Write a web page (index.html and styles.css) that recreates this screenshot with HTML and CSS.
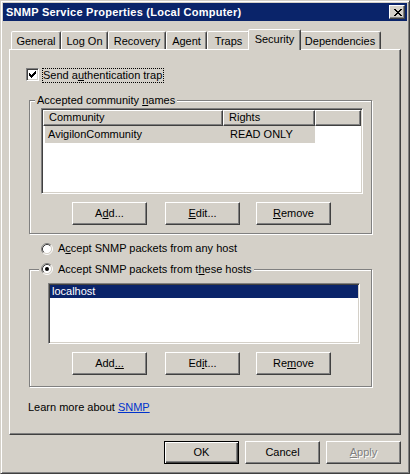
FILE: index.html
```html
<!DOCTYPE html>
<html>
<head>
<meta charset="utf-8">
<title>SNMP Service Properties</title>
<link rel="stylesheet" href="styles.css">
</head>
<body>
<div class="window">
  <div class="titlebar">
    <span class="title">SNMP Service Properties (Local Computer)</span>
    <button class="close" type="button" aria-label="Close">
      <svg width="8" height="7" viewBox="0 0 8 7" shape-rendering="crispEdges">
        <g fill="#000">
          <rect x="0" y="0" width="2" height="1"/><rect x="6" y="0" width="2" height="1"/>
          <rect x="1" y="1" width="2" height="1"/><rect x="5" y="1" width="2" height="1"/>
          <rect x="2" y="2" width="4" height="1"/>
          <rect x="3" y="3" width="2" height="1"/>
          <rect x="2" y="4" width="4" height="1"/>
          <rect x="1" y="5" width="2" height="1"/><rect x="5" y="5" width="2" height="1"/>
          <rect x="0" y="6" width="2" height="1"/><rect x="6" y="6" width="2" height="1"/>
        </g>
      </svg>
    </button>
  </div>
  <div class="body">
    <div class="tabs">
      <div class="tab t-general">General</div>
      <div class="tab t-logon">Log On</div>
      <div class="tab t-recovery">Recovery</div>
      <div class="tab t-agent">Agent</div>
      <div class="tab t-traps">Traps</div>
      <div class="tab t-security active">Security</div>
      <div class="tab t-deps">Dependencies</div>
    </div>
    <div class="page">
      <div class="check-row">
        <span class="checkbox">
          <svg width="7" height="7" viewBox="0 0 7 7" shape-rendering="crispEdges">
            <g fill="#000">
              <rect x="6" y="0" width="1" height="1"/>
              <rect x="5" y="1" width="2" height="1"/>
              <rect x="0" y="2" width="1" height="1"/><rect x="4" y="2" width="3" height="1"/>
              <rect x="0" y="3" width="2" height="1"/><rect x="3" y="3" width="3" height="1"/>
              <rect x="0" y="4" width="5" height="1"/>
              <rect x="1" y="5" width="3" height="1"/>
              <rect x="2" y="6" width="1" height="1"/>
            </g>
          </svg>
        </span>
        <span class="focus">Send a<u>u</u>thentication trap</span>
      </div>

      <fieldset class="group group-community">
        <legend>Accepted community <u>n</u>ames</legend>
        <div class="listview">
          <div class="lv-header">
            <div class="hcell h1">Community</div>
            <div class="hcell h2">Rights</div>
            <div class="hcell h3"></div>
          </div>
          <div class="lv-row">
            <div class="lc1">AvigilonCommunity</div>
            <div class="lc2">READ ONLY</div>
          </div>
        </div>
        <div class="btn-row">
          <button class="btn" type="button">A<u>d</u>d...</button>
          <button class="btn" type="button"><u>E</u>dit...</button>
          <button class="btn remove" type="button"><u>R</u>emove</button>
        </div>
      </fieldset>

      <div class="radio-row">
        <svg class="radio" width="12" height="12" viewBox="0 0 12 12">
          <circle cx="6" cy="6" r="4.5" fill="#fff"/>
          <path d="M2.11 9.89 A5.5 5.5 0 0 1 9.89 2.11" fill="none" stroke="#808080"/>
          <path d="M9.89 2.11 A5.5 5.5 0 0 1 2.11 9.89" fill="none" stroke="#fff"/>
          <path d="M2.82 9.18 A4.5 4.5 0 0 1 9.18 2.82" fill="none" stroke="#404040"/>
          <path d="M9.18 2.82 A4.5 4.5 0 0 1 2.82 9.18" fill="none" stroke="#d4d0c8"/>
        </svg>
        <span>A<u>c</u>cept SNMP packets from any host</span>
      </div>

      <fieldset class="group group-hosts">
        <legend>
          <span class="legend-radio">
            <svg class="radio" width="12" height="12" viewBox="0 0 12 12">
              <circle cx="6" cy="6" r="4.5" fill="#fff"/>
              <path d="M2.11 9.89 A5.5 5.5 0 0 1 9.89 2.11" fill="none" stroke="#808080"/>
              <path d="M9.89 2.11 A5.5 5.5 0 0 1 2.11 9.89" fill="none" stroke="#fff"/>
              <path d="M2.82 9.18 A4.5 4.5 0 0 1 9.18 2.82" fill="none" stroke="#404040"/>
              <path d="M9.18 2.82 A4.5 4.5 0 0 1 2.82 9.18" fill="none" stroke="#d4d0c8"/>
              <circle cx="6" cy="6" r="2" fill="#000"/>
            </svg>
            <span>Accept SNMP packets from t<u>h</u>ese hosts</span>
          </span>
        </legend>
        <div class="listbox">
          <div class="lb-item selected">localhost</div>
        </div>
        <div class="btn-row">
          <button class="btn" type="button">Add<u>...</u></button>
          <button class="btn" type="button">Ed<u>i</u>t...</button>
          <button class="btn remove" type="button">Re<u>m</u>ove</button>
        </div>
      </fieldset>

      <p class="learn">Learn more about <a href="#" class="link">SNMP</a></p>
    </div>
    <div class="footer">
      <button class="btn default" type="button">OK</button>
      <button class="btn" type="button">Cancel</button>
      <button class="btn disabled" type="button"><u>A</u>pply</button>
    </div>
  </div>
</div>
</body>
</html>
```

FILE: styles.css
```css
* {
  box-sizing: border-box;
}

html,
body {
  margin: 0;
  padding: 0;
  background: #d4d0c8;
}

body {
  font-family: "Liberation Sans", Arial, sans-serif;
  font-size: 11px;
  line-height: 13px;
  color: #000;
}

.window {
  width: 410px;
  height: 474px;
  border: 1px solid;
  border-color: #d4d0c8 #404040 #404040 #d4d0c8;
  box-shadow: inset 1px 1px #fff, inset -1px -1px #808080;
  padding: 2px;
  display: flex;
  flex-direction: column;
}

/* Title bar */
.titlebar {
  height: 18px;
  flex: none;
  background: #0a246a;
  color: #fff;
  font-weight: bold;
  display: flex;
  align-items: flex-start;
  padding-left: 3px;
}

.title {
  flex: 1;
  line-height: 18px;
  letter-spacing: 0.25px;
  white-space: nowrap;
}

.close {
  appearance: none;
  width: 16px;
  height: 14px;
  margin: 2px 2px 0 0;
  padding: 3px 0 0 4px;
  border: 1px solid;
  border-color: #fff #404040 #404040 #fff;
  box-shadow: inset -1px -1px #808080;
  background: #d4d0c8;
  display: flex;
  align-items: flex-start;
  justify-content: flex-start;
}

.close svg {
  display: block;
}

/* Body */
.body {
  flex: 1;
  padding: 0 6px;
  display: flex;
  flex-direction: column;
}

.tabs {
  height: 28px;
  flex: none;
  padding-left: 2px;
  display: flex;
  align-items: flex-end;
}

.tab {
  flex: none;
  height: 18px;
  border: 1px solid;
  border-bottom: none;
  border-color: #fff #404040 transparent #fff;
  box-shadow: inset -1px 0 #808080;
  border-radius: 2px 2px 0 0;
  padding-top: 3px;
  text-align: center;
  white-space: nowrap;
  background: #d4d0c8;
}

.t-general { width: 50px; }
.t-logon { width: 47px; }
.t-recovery { width: 58px; }
.t-agent { width: 41px; }
.t-traps { width: 43px; }
.t-security { width: 49px; }
.t-deps { width: 82px; }

.tab.active {
  width: 53px;
  height: 21px;
  margin: 0 -2px -1px;
  position: relative;
  z-index: 1;
}

.page {
  flex: none;
  width: 392px;
  height: 386px;
  border: 1px solid;
  border-color: #fff #404040 #404040 #fff;
  box-shadow: inset -1px -1px #808080;
  display: flex;
  flex-direction: column;
  align-items: flex-start;
}

/* Checkbox */
.check-row {
  display: flex;
  align-items: flex-start;
  margin: 18px 0 0 16px;
}

.checkbox {
  width: 13px;
  height: 13px;
  border: 1px solid;
  border-color: #808080 #fff #fff #808080;
  box-shadow: inset 1px 1px #404040, inset -1px -1px #d4d0c8;
  background: #fff;
  padding: 2px;
  margin-right: 3px;
}

.checkbox svg {
  display: block;
}

.focus {
  border: 1px dotted #000;
  padding: 0 1px 0 0;
  white-space: nowrap;
}

/* Group boxes */
.group {
  margin: 11px 0 0 19px;
  padding: 0;
  width: 343px;
  min-width: 0;
  border: 1px solid #808080;
  box-shadow: inset 1px 1px #fff, 1px 1px #fff;
}

.group legend {
  padding: 0 2px;
  margin-left: 5px;
  line-height: 13px;
  background: #d4d0c8;
  white-space: nowrap;
}

.group-community {
  padding-bottom: 8px;
}

.group-hosts {
  margin-top: 8px;
  padding-bottom: 11px;
}

.group-hosts legend {
  margin-left: 9px;
}

.legend-radio {
  display: flex;
  align-items: flex-start;
}

.radio {
  display: block;
  flex: none;
  margin-right: 5px;
}

/* List view */
.listview {
  margin: 1px 0 0 11px;
  width: 322px;
  height: 86px;
  border: 1px solid;
  border-color: #808080 #fff #fff #808080;
  box-shadow: inset 1px 1px #404040, inset -1px -1px #d4d0c8;
  background: #fff;
  padding: 1px;
}

.lv-header {
  display: flex;
  height: 16px;
}

.hcell {
  height: 16px;
  border: 1px solid;
  border-color: #fff #404040 #404040 #fff;
  box-shadow: inset -1px -1px #808080;
  background: #d4d0c8;
  padding-left: 5px;
  line-height: 13px;
}

.h1 { width: 180px; }
.h2 { width: 92px; }
.h3 { flex: 1; }

.lv-row {
  display: flex;
  margin-left: 2px;
  width: 270px;
  height: 17px;
  line-height: 17px;
  background: #d4d0c8;
}

.lc1 {
  width: 178px;
  padding-left: 3px;
}

.lc2 {
  flex: 1;
  padding-left: 7px;
}

/* List box */
.listbox {
  margin: 7px 0 0 18px;
  width: 312px;
  height: 61px;
  border: 1px solid;
  border-color: #808080 #fff #fff #808080;
  box-shadow: inset 1px 1px #404040, inset -1px -1px #d4d0c8;
  background: #fff;
  padding: 1px;
}

.lb-item {
  height: 13px;
  line-height: 13px;
  padding-left: 2px;
}

.lb-item.selected {
  background: #0a246a;
  color: #fff;
}

/* Buttons */
.btn-row {
  display: flex;
  gap: 18px;
  margin: 8px 0 0 42px;
}

.btn-row .remove {
  margin-left: -2px;
}

.btn {
  appearance: none;
  width: 75px;
  height: 23px;
  margin: 0;
  padding: 0;
  border: 1px solid;
  border-color: #fff #404040 #404040 #fff;
  box-shadow: inset -1px -1px #808080;
  background: #d4d0c8;
  font: inherit;
  line-height: 13px;
  color: #000;
  text-align: center;
}

.btn.default {
  border-color: #000;
  box-shadow: inset 1px 1px #fff, inset -1px -1px #404040, inset -2px -2px #808080;
}

.btn.disabled {
  color: #808080;
  text-shadow: 1px 1px #fff;
}

/* Radio row */
.radio-row {
  display: flex;
  align-items: flex-start;
  margin: 8px 0 0 31px;
}

.radio-row .radio {
  margin-top: 1px;
}

/* Link */
.learn {
  margin: 14px 0 0 18px;
}

.link {
  color: #0033cc;
  text-decoration: underline;
}

/* Footer */
.footer {
  display: flex;
  justify-content: flex-end;
  gap: 6px;
  margin-top: 6px;
}
```
